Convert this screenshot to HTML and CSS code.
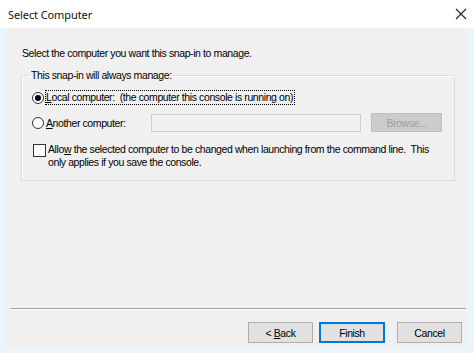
FILE: index.html
```html
<!DOCTYPE html>
<html lang="en">
<head>
    <meta charset="UTF-8">
    <title>Select Computer</title>
    <link rel="stylesheet" href="styles.css">
</head>
<body>

<div class="window">
    <div class="title-bar">
        <span class="title">Select Computer</span>
        <svg class="close" width="12" height="12" viewBox="0 0 12 12">
            <path d="M1 1 L11 11 M11 1 L1 11" stroke="#222" stroke-width="1.1" fill="none"/>
        </svg>
    </div>
    <div class="content">
        <div class="main">
            <p class="intro">Select the computer you want this snap-in to manage.</p>
            <fieldset class="group">
                <legend>This snap-in will always manage:</legend>
                <div class="row">
                    <span class="radio checked"></span>
                    <span class="focus"><u>L</u>ocal computer:&nbsp; (the computer this console is running on)</span>
                </div>
                <div class="row">
                    <span class="radio"></span>
                    <span class="label-another"><u>A</u>nother computer:</span>
                    <span class="textbox"></span>
                    <span class="btn disabled">Browse...</span>
                </div>
                <div class="check-row">
                    <span class="checkbox"></span>
                    <span class="check-text">Allo<u>w</u> the selected computer to be changed when launching from the command line.&nbsp; This only applies if you save the console.</span>
                </div>
            </fieldset>
        </div>
        <div class="separator"></div>
        <div class="buttons">
            <span class="btn"><span>&lt; <u>B</u>ack</span></span>
            <span class="btn default">Finish</span>
            <span class="btn cancel">Cancel</span>
        </div>
    </div>
</div>

</body>
</html>
```

FILE: styles.css
```css
body {
    margin: 0;
    font-family: "Liberation Sans", Arial, sans-serif;
    font-size: 10.5px;
    letter-spacing: -0.4px;
    color: #000;
    background-color: #eaf5fc;
}
.window {
    width: 474px;
    height: 353px;
    display: flex;
    flex-direction: column;
    box-sizing: border-box;
    padding: 0 8px 5px 3px;
    background-color: #eaf5fc;
}
.title-bar {
    height: 28px;
    margin: 0 -8px 0 -3px;
    padding: 0 7px 0 8px;
    background-color: #fff;
    display: flex;
    align-items: center;
    justify-content: space-between;
}
.title {
    font-family: "Noto Sans", "Liberation Sans", sans-serif;
    font-size: 11px;
    letter-spacing: -0.1px;
    color: #111;
}
.content {
    flex: 1;
    background-color: #f0f0f0;
    display: flex;
    flex-direction: column;
}
.main {
    flex: 1;
    padding: 0 11px 0 18px;
}
.intro {
    margin: 18px 0 0 1px;
    line-height: 14px;
}
.group {
    margin: 9px 0 0 0;
    padding: 3px 10px 0 10px;
    height: 107px;
    border: 1px solid #dcdcdc;
    box-shadow: inset 1px 1px 0 #fff;
}
.group legend {
    padding: 0 1px;
    margin-left: -2px;
    line-height: 13px;
}
.row {
    display: flex;
    align-items: center;
    height: 25px;
}
.radio {
    width: 12px;
    height: 12px;
    border: 1px solid #333;
    border-radius: 50%;
    background-color: #fff;
    box-sizing: border-box;
    position: relative;
    margin-right: 1px;
    flex-shrink: 0;
}
.radio.checked::after {
    content: "";
    position: absolute;
    left: 2px;
    top: 2px;
    width: 6px;
    height: 6px;
    border-radius: 50%;
    background-color: #000;
}
.focus {
    border: 1px dotted #000;
    padding: 0 1px 1px 0;
    line-height: 12px;
}
.label-another {
    width: 105px;
    padding-left: 1px;
}
.textbox {
    width: 210px;
    height: 18px;
    border: 1px solid #cfcfcf;
    box-sizing: border-box;
    background-color: #f0f0f0;
}
.btn {
    display: inline-flex;
    align-items: center;
    justify-content: center;
    height: 21px;
    width: 65px;
    box-sizing: border-box;
    border: 1px solid #adadad;
    background-color: #e1e1e1;
}
.btn.disabled {
    margin-left: 10px;
    width: 71px;
    height: 19px;
    color: #a0a0a0;
    background-color: #cccccc;
    border-color: #bfbfbf;
}
.btn.default {
    border: 2px solid #0078d7;
    width: 66px;
}
.check-row {
    display: flex;
    align-items: flex-start;
    margin-top: 8px;
}
.checkbox {
    width: 13px;
    height: 13px;
    border: 1px solid #333;
    box-sizing: border-box;
    background-color: #fff;
    margin: 1px 2px 0 1px;
    flex-shrink: 0;
}
.check-text {
    line-height: 13px;
    width: 392px;
}
.separator {
    height: 1px;
    margin: 0 0 0 7px;
    background-color: #a0a0a0;
    border-bottom: 1px solid #fff;
}
.buttons {
    display: flex;
    justify-content: flex-end;
    gap: 6px;
    padding: 12px 4px 5px 0;
}
.btn.cancel {
    margin-left: 6px;
}
```
